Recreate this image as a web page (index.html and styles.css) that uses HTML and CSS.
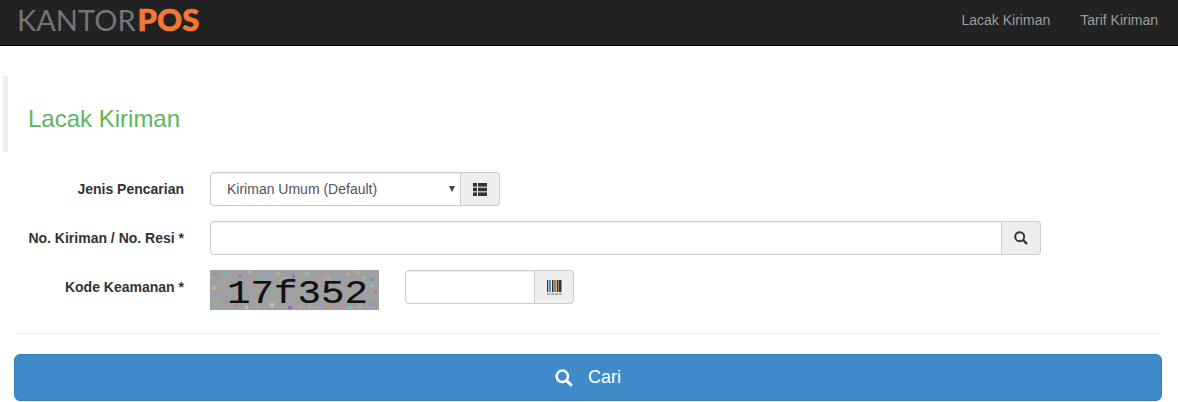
FILE: index.html
```html
<!DOCTYPE html>
<html lang="en">

<head>
    <meta charset="UTF-8">
    <meta name="viewport" content="width=device-width, initial-scale=1.0">
    <title>Lacak Kiriman</title>
    <link rel="stylesheet" href="styles.css">
</head>

<body>
    <!-- Top navbar -->
    <nav class="navbar">
        <a class="brand" href="#"><span class="brand-light">KANTOR</span><span class="brand-bold">POS</span></a>
        <div class="nav-links">
            <a href="#">Lacak Kiriman</a>
            <a href="#">Tarif Kiriman</a>
        </div>
    </nav>

    <div class="heading">
        <h3>Lacak Kiriman</h3>
    </div>

    <form class="track-form">
        <div class="form-row">
            <label class="form-label">Jenis Pencarian</label>
            <div class="input-group group-select">
                <div class="select-wrap">
                    <select class="form-control">
                        <option>Kiriman Umum (Default)</option>
                    </select>
                    <span class="select-arrow"></span>
                </div>
                <span class="addon">
                    <svg width="14" height="13" viewBox="0 0 14 13" fill="#333">
                        <rect x="0" y="0" width="4" height="3.6"/>
                        <rect x="5" y="0" width="9" height="3.6"/>
                        <rect x="0" y="4.7" width="4" height="3.6"/>
                        <rect x="5" y="4.7" width="9" height="3.6"/>
                        <rect x="0" y="9.4" width="4" height="3.6"/>
                        <rect x="5" y="9.4" width="9" height="3.6"/>
                    </svg>
                </span>
            </div>
        </div>

        <div class="form-row">
            <label class="form-label">No. Kiriman / No. Resi *</label>
            <div class="input-group group-resi">
                <input class="form-control" type="text">
                <span class="addon">
                    <svg width="14" height="14" viewBox="0 0 14 14" fill="none" stroke="#333">
                        <circle cx="5.7" cy="5.7" r="4.5" stroke-width="1.9"/>
                        <path d="M9 9l4 4" stroke-width="2.4"/>
                    </svg>
                </span>
            </div>
        </div>

        <div class="form-row form-row-captcha">
            <label class="form-label">Kode Keamanan *</label>
            <svg class="captcha" width="169" height="40" viewBox="0 0 169 40">
                <rect width="169" height="40" fill="#a0a0a0"/>
                <g>
                    <rect x="3" y="3" width="5" height="3" fill="#b08a8a"/>
                    <rect x="14" y="2" width="4" height="3" fill="#7fb0b0"/>
                    <rect x="28" y="4" width="4" height="3" fill="#8a8ab8"/>
                    <rect x="38" y="1" width="3" height="3" fill="#c0b0a0"/>
                    <rect x="48" y="6" width="4" height="4" fill="#78b8a8"/>
                    <rect x="56" y="2" width="3" height="3" fill="#8fa8d0"/>
                    <rect x="66" y="2" width="4" height="3" fill="#b8b088"/>
                    <rect x="74" y="7" width="3" height="3" fill="#c8a0b0"/>
                    <rect x="82" y="5" width="3" height="3" fill="#9a78c8"/>
                    <rect x="95" y="2" width="4" height="3" fill="#90c0a0"/>
                    <rect x="108" y="3" width="5" height="3" fill="#b88a9a"/>
                    <rect x="117" y="7" width="3" height="3" fill="#88b8c8"/>
                    <rect x="128" y="6" width="4" height="3" fill="#78a8c8"/>
                    <rect x="137" y="3" width="3" height="3" fill="#b8a8d0"/>
                    <rect x="146" y="1" width="4" height="3" fill="#c8a878"/>
                    <rect x="153" y="6" width="3" height="3" fill="#90c0b0"/>
                    <rect x="160" y="8" width="4" height="3" fill="#8888c8"/>
                    <rect x="2" y="16" width="4" height="4" fill="#b8b888"/>
                    <rect x="10" y="22" width="3" height="4" fill="#b888b8"/>
                    <rect x="20" y="14" width="4" height="3" fill="#78b8b8"/>
                    <rect x="1" y="26" width="3" height="3" fill="#90a8c8"/>
                    <rect x="12" y="9" width="3" height="3" fill="#c0a090"/>
                    <rect x="5" y="32" width="4" height="3" fill="#88b898"/>
                    <rect x="15" y="30" width="3" height="3" fill="#a890c8"/>
                    <rect x="24" y="34" width="4" height="3" fill="#b88898"/>
                    <rect x="35" y="36" width="3" height="3" fill="#c8c090"/>
                    <rect x="44" y="35" width="4" height="3" fill="#78b8c8"/>
                    <rect x="52" y="36" width="3" height="3" fill="#b890a0"/>
                    <rect x="60" y="33" width="4" height="4" fill="#c8b8c8"/>
                    <rect x="70" y="35" width="3" height="3" fill="#88a8d0"/>
                    <rect x="78" y="36" width="4" height="3" fill="#9868c8"/>
                    <rect x="88" y="35" width="3" height="3" fill="#c8a088"/>
                    <rect x="98" y="35" width="3" height="3" fill="#88c898"/>
                    <rect x="108" y="36" width="3" height="3" fill="#a8a0d8"/>
                    <rect x="118" y="34" width="4" height="3" fill="#c89878"/>
                    <rect x="128" y="36" width="3" height="3" fill="#c090b0"/>
                    <rect x="138" y="36" width="4" height="3" fill="#78c8b8"/>
                    <rect x="148" y="35" width="3" height="3" fill="#b0b890"/>
                    <rect x="158" y="32" width="4" height="3" fill="#8898c8"/>
                    <rect x="164" y="20" width="3" height="4" fill="#b878a8"/>
                    <rect x="160" y="14" width="3" height="3" fill="#90c0c0"/>
                    <rect x="60" y="20" width="3" height="3" fill="#78b898"/>
                    <rect x="118" y="12" width="3" height="3" fill="#c8b878"/>
                    <rect x="40" y="14" width="3" height="3" fill="#c090a0"/>
                    <rect x="94" y="24" width="3" height="3" fill="#90b0d0"/>
                </g>
                <text class="captcha-text" x="17" y="33" textLength="141" lengthAdjust="spacingAndGlyphs">17f352</text>
            </svg>
            <div class="input-group group-code">
                <input class="form-control" type="text">
                <span class="addon">
                    <svg width="15" height="15" viewBox="0 0 15 15" fill="#333">
                        <rect x="0" y="0" width="1" height="12"/>
                        <rect x="1.5" y="0" width="2.5" height="12" fill="#5f8fb8"/>
                        <rect x="5" y="0" width="1.5" height="12"/>
                        <rect x="7" y="0" width="2.5" height="12" fill="#a8843f"/>
                        <rect x="10" y="0" width="1.5" height="12"/>
                        <rect x="12" y="0" width="2.5" height="12"/>
                        <path d="M0 14h14.5" stroke="#666" stroke-dasharray="3 1"/>
                    </svg>
                </span>
            </div>
        </div>

        <hr class="divider">

        <button class="btn-search" type="button">
            <svg width="18" height="18" viewBox="0 0 18 18" fill="none" stroke="#fff">
                <circle cx="7.3" cy="7.3" r="5.7" stroke-width="2.5"/>
                <path d="M11.5 11.5l5.3 5.3" stroke-width="3"/>
            </svg>
            Cari
        </button>
    </form>
</body>

</html>
```

FILE: styles.css
```css
* {
    box-sizing: border-box;
}

body {
    font-family: "Liberation Sans", Arial, sans-serif;
    font-size: 14px;
    color: #333;
    background: #fff;
    margin: 0;
    padding: 0;
}

a {
    text-decoration: none;
}

.navbar {
    display: flex;
    align-items: flex-start;
    justify-content: space-between;
    height: 46px;
    padding: 0 20px 0 17px;
    background: #222;
    border-bottom: 1px solid #080808;
}

.brand {
    display: flex;
    align-items: baseline;
    font-family: Lato, sans-serif;
    font-size: 29px;
    line-height: 38px;
}

.brand-light {
    color: #737478;
    font-weight: 400;
    margin-right: 2px;
}

.brand-bold {
    color: #f47735;
    font-size: 31px;
    font-weight: 900;
    -webkit-text-stroke: 0.7px #f47735;
}

.nav-links {
    display: flex;
    gap: 30px;
    line-height: 40px;
}

.nav-links a {
    color: #9d9d9d;
}

.heading {
    height: 76px;
    margin: 30px 0 20px 3px;
    padding: 28px 0 0 20px;
    border-left: 5px solid #eee;
}

.heading h3 {
    margin: 0;
    font-size: 24px;
    font-weight: 400;
    line-height: 30px;
    color: #5cb85c;
}

.track-form {
    padding: 0 16px 0 14px;
}

.form-row {
    display: flex;
    align-items: flex-start;
    margin-bottom: 15px;
}

.form-label {
    width: 170px;
    margin-right: 26px;
    padding-top: 9px;
    font-weight: 700;
    line-height: 17px;
    text-align: right;
}

.input-group {
    display: flex;
}

.group-select {
    width: 290px;
}

.group-resi {
    width: 831px;
}

.group-code {
    width: 169px;
}

.select-wrap {
    position: relative;
    flex: 1;
}

.form-control {
    display: block;
    width: 100%;
    flex: 1;
    min-width: 0;
    height: 34px;
    padding: 6px 12px;
    font-family: inherit;
    font-size: 14px;
    color: #555;
    background: #fff;
    border: 1px solid #ccc;
    border-radius: 4px 0 0 4px;
    box-shadow: inset 0 1px 1px rgba(0, 0, 0, 0.075);
}

select.form-control {
    padding-left: 16px;
    appearance: none;
}

.select-arrow {
    position: absolute;
    top: 14px;
    right: 6px;
    border-top: 6px solid #444;
    border-left: 3.5px solid transparent;
    border-right: 3.5px solid transparent;
}

.addon {
    display: flex;
    align-items: center;
    justify-content: center;
    width: 39px;
    flex: none;
    height: 34px;
    background: #eee;
    border: 1px solid #ccc;
    border-left: 0;
    border-radius: 0 4px 4px 0;
}

.form-row-captcha {
    margin-bottom: 0;
}

.captcha {
    display: block;
    margin-right: 26px;
    overflow: visible;
}

.captcha-text {
    font-family: "Liberation Mono", monospace;
    font-size: 34px;
    fill: #111;
    stroke: #111;
    stroke-width: 0.2px;
}

.divider {
    margin: 23px 2px 20px 2px;
    border: 0;
    border-top: 1px solid #eee;
}

.btn-search {
    display: flex;
    align-items: center;
    justify-content: center;
    gap: 15px;
    width: 1148px;
    height: 47px;
    padding: 0;
    font-family: inherit;
    font-size: 18px;
    color: #fff;
    background: #428bca;
    border: 1px solid #357ebd;
    border-radius: 6px;
    cursor: pointer;
}
```
